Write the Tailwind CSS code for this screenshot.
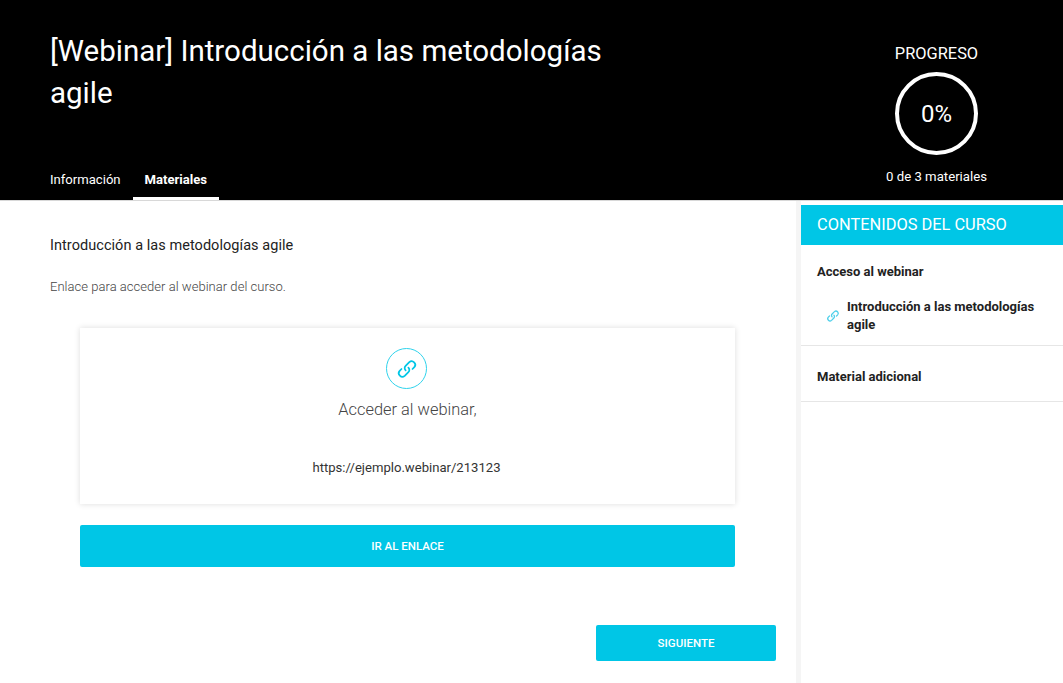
<!DOCTYPE html>
<html lang="es">
<head>
<meta charset="utf-8">
<title>Webinar</title>
<script src="https://cdn.jsdelivr.net/npm/@tailwindcss/browser@4"></script>
</head>
<body class="font-[Roboto,sans-serif] bg-white overflow-hidden">
<div class="w-[1063px] h-[683px] flex flex-col overflow-hidden">
  <header class="h-[201px] bg-black text-white flex shrink-0 border-b border-[#d8d8d8]">
    <div class="w-[810px] pl-[50px] flex flex-col">
      <h1 class="text-[29.5px] leading-[42px] font-normal w-[600px] mt-[30px]">[Webinar] Introducción a las metodologías agile</h1>
      <nav class="mt-auto flex text-[13.1px] font-normal">
        <a class="h-[42px] pt-[12px] leading-[20px] mr-[12px]">Información</a>
        <a class="h-[42px] pt-[12px] leading-[20px] px-[12px] font-bold border-b-[3px] border-white">Materiales</a>
      </nav>
    </div>
    <div class="flex-1 flex flex-col items-center">
      <div class="mt-[44px] text-[16.4px] leading-[20px]">PROGRESO</div>
      <div class="mt-[8px] w-[83px] h-[83px] rounded-full border-[4px] border-white flex items-center justify-center text-[24px]">0%</div>
      <div class="mt-[12px] text-[13.2px] leading-[20px]">0 de 3 materiales</div>
    </div>
  </header>
  <div class="flex flex-1 min-h-0">
    <main class="w-[796px] shrink-0 flex flex-col">
      <h2 class="ml-[50px] mt-[35px] text-[14.5px] leading-[20px] font-normal text-[#222] tracking-[0.05px]">Introducción a las metodologías agile</h2>
      <p class="ml-[50px] mt-[21px] text-[13px] leading-[20px] font-light text-[#444] tracking-[0.03px]">Enlace para acceder al webinar del curso.</p>
      <section class="ml-[80px] mt-[31px] w-[655px] h-[176px] bg-white shadow-[0_0_6px_rgba(0,0,0,0.14)] flex flex-col items-center">
        <div class="mt-[20px] w-[41px] h-[41px] rounded-full border border-[#2fd3ec] flex items-center justify-center -translate-x-[1px]">
          <svg viewBox="0 0 24 24" class="w-[22px] h-[22px]" fill="none" stroke="#00c6e6" stroke-width="1.9" stroke-linecap="round" stroke-linejoin="round"><path d="M10.5 13.5a3.5 3.5 0 0 1 0-5l4-4a3.9 3.9 0 0 1 5.5 5.5l-2 2"/><path d="M13.5 10.5a3.5 3.5 0 0 1 0 5l-4 4a3.9 3.9 0 0 1-5.5-5.5l2-2"/></svg>
        </div>
        <div class="mt-[9px] text-[16.4px] leading-[24px] font-light text-[#444]">Acceder al webinar,</div>
        <div class="mt-[36px] text-[13.1px] leading-[20px] text-[#333] -translate-x-[1px]">https://ejemplo.webinar/213123</div>
      </section>
      <a class="ml-[80px] mt-[21px] w-[655px] h-[42px] bg-[#00c6e6] rounded-[2px] text-white text-[11.5px] font-medium flex items-center justify-center pt-[1px]">IR AL ENLACE</a>
      <a class="ml-[596px] mt-[58px] w-[180px] h-[36px] bg-[#00c6e6] rounded-[2px] text-white text-[11.5px] font-medium flex items-center justify-center pt-[1px]">SIGUIENTE</a>
    </main>
    <aside class="flex-1 border-l-[5px] border-[#f5f5f5] pt-[4px]">
      <div class="h-[40px] bg-[#00c6e6] text-white text-[16.4px] pl-[16px] pt-[1px] flex items-center">CONTENIDOS DEL CURSO</div>
      <div class="border-b border-[#e6e6e6] h-[101px] pt-[17px]">
        <div class="pl-[16px] text-[13px] leading-[20px] font-bold text-[#222]">Acceso al webinar</div>
        <div class="flex items-center mt-[16px] pl-[25px]">
          <svg viewBox="0 0 24 24" class="w-[14px] h-[14px] shrink-0" fill="none" stroke="#4fd0ea" stroke-width="2.2" stroke-linecap="round" stroke-linejoin="round"><path d="M10.5 13.5a3.5 3.5 0 0 1 0-5l4-4a3.9 3.9 0 0 1 5.5 5.5l-2 2"/><path d="M13.5 10.5a3.5 3.5 0 0 1 0 5l-4 4a3.9 3.9 0 0 1-5.5-5.5l2-2"/></svg>
          <div class="ml-[7px] text-[13px] leading-[18px] font-bold text-[#222] w-[200px]">Introducción a las metodologías agile</div>
        </div>
      </div>
      <div class="border-b border-[#e6e6e6] h-[56px] pl-[16px] pt-[21px] text-[13px] leading-[20px] font-bold text-[#222]">Material adicional</div>
    </aside>
  </div>
</div>
</body>
</html>
